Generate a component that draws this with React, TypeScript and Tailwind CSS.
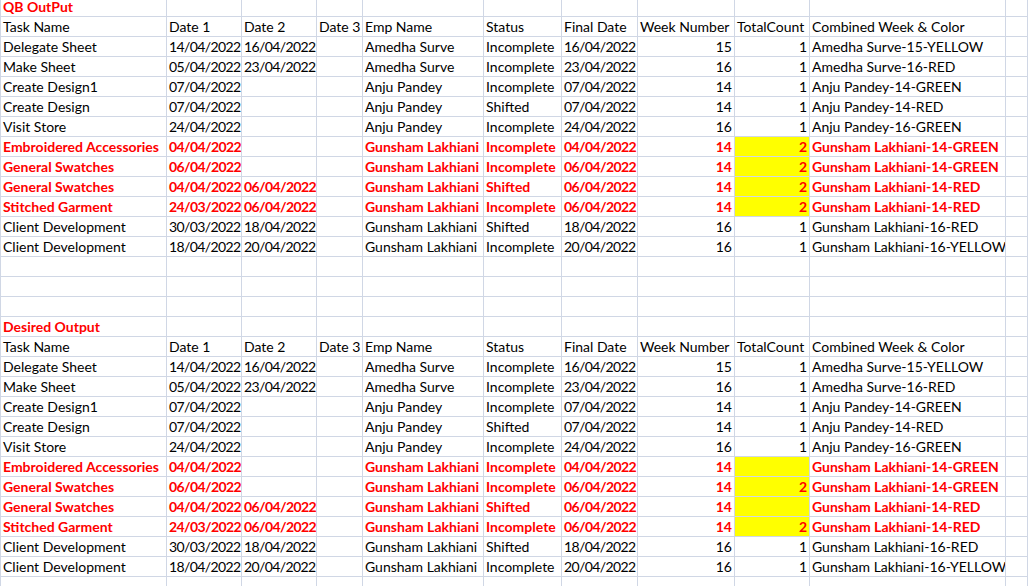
import React from "react";

type Row = {
  task: string;
  d1: string;
  d2: string;
  emp: string;
  status: string;
  final: string;
  week: number;
  total: string;
  combined: string;
  hot?: boolean;
};

const qbRows: Row[] = [
  { task: "Delegate Sheet", d1: "14/04/2022", d2: "16/04/2022", emp: "Amedha Surve", status: "Incomplete", final: "16/04/2022", week: 15, total: "1", combined: "Amedha Surve-15-YELLOW" },
  { task: "Make Sheet", d1: "05/04/2022", d2: "23/04/2022", emp: "Amedha Surve", status: "Incomplete", final: "23/04/2022", week: 16, total: "1", combined: "Amedha Surve-16-RED" },
  { task: "Create Design1", d1: "07/04/2022", d2: "", emp: "Anju Pandey", status: "Incomplete", final: "07/04/2022", week: 14, total: "1", combined: "Anju Pandey-14-GREEN" },
  { task: "Create Design", d1: "07/04/2022", d2: "", emp: "Anju Pandey", status: "Shifted", final: "07/04/2022", week: 14, total: "1", combined: "Anju Pandey-14-RED" },
  { task: "Visit Store", d1: "24/04/2022", d2: "", emp: "Anju Pandey", status: "Incomplete", final: "24/04/2022", week: 16, total: "1", combined: "Anju Pandey-16-GREEN" },
  { task: "Embroidered Accessories", d1: "04/04/2022", d2: "", emp: "Gunsham Lakhiani", status: "Incomplete", final: "04/04/2022", week: 14, total: "2", combined: "Gunsham Lakhiani-14-GREEN", hot: true },
  { task: "General Swatches", d1: "06/04/2022", d2: "", emp: "Gunsham Lakhiani", status: "Incomplete", final: "06/04/2022", week: 14, total: "2", combined: "Gunsham Lakhiani-14-GREEN", hot: true },
  { task: "General Swatches", d1: "04/04/2022", d2: "06/04/2022", emp: "Gunsham Lakhiani", status: "Shifted", final: "06/04/2022", week: 14, total: "2", combined: "Gunsham Lakhiani-14-RED", hot: true },
  { task: "Stitched Garment", d1: "24/03/2022", d2: "06/04/2022", emp: "Gunsham Lakhiani", status: "Incomplete", final: "06/04/2022", week: 14, total: "2", combined: "Gunsham Lakhiani-14-RED", hot: true },
  { task: "Client Development", d1: "30/03/2022", d2: "18/04/2022", emp: "Gunsham Lakhiani", status: "Shifted", final: "18/04/2022", week: 16, total: "1", combined: "Gunsham Lakhiani-16-RED" },
  { task: "Client Development", d1: "18/04/2022", d2: "20/04/2022", emp: "Gunsham Lakhiani", status: "Incomplete", final: "20/04/2022", week: 16, total: "1", combined: "Gunsham Lakhiani-16-YELLOW" },
];

// desired output only shows the count once per group
const desiredRows: Row[] = qbRows.map((r, i) =>
  r.hot && (i === 5 || i === 7) ? { ...r, total: "" } : r
);

const cols = "grid grid-cols-[166px_75px_75px_46px_121px_78px_76px_97px_75px_196px_1fr]";
const cell = "h-5 border-r border-b border-[#d0d7e5] px-[2px] leading-[20px] whitespace-nowrap overflow-hidden";

function Cell({ children, right, yellow, num }: { children?: React.ReactNode; right?: boolean; yellow?: boolean; num?: boolean }) {
  return (
    <div className={`${cell} ${right ? "text-right" : ""} ${yellow ? "bg-[#ffff00]" : ""} ${num ? "tracking-[-0.6px]" : ""}`}>
      {children}
    </div>
  );
}

function EmptyRow() {
  return (
    <div className={cols}>
      {Array.from({ length: 11 }).map((_, i) => (
        <Cell key={i} />
      ))}
    </div>
  );
}

function TitleRow({ title }: { title: string }) {
  return (
    <div className={cols}>
      <Cell>
        <span className="font-bold text-[#ff0000]">{title}</span>
      </Cell>
      {Array.from({ length: 10 }).map((_, i) => (
        <Cell key={i} />
      ))}
    </div>
  );
}

function HeaderRow() {
  const heads = ["Task Name", "Date 1", "Date 2", "Date 3", "Emp Name", "Status", "Final Date", "Week Number", "TotalCount", "Combined Week & Color", ""];
  return (
    <div className={cols}>
      {heads.map((h, i) => (
        <Cell key={i}>{h}</Cell>
      ))}
    </div>
  );
}

function DataRow({ row }: { row: Row }) {
  return (
    <div className={`${cols} ${row.hot ? "font-bold text-[#ff0000]" : ""}`}>
      <Cell>{row.task}</Cell>
      <Cell right num>{row.d1}</Cell>
      <Cell right num>{row.d2}</Cell>
      <Cell />
      <Cell>{row.emp}</Cell>
      <Cell>{row.status}</Cell>
      <Cell right num>{row.final}</Cell>
      <Cell right>{row.week}</Cell>
      <Cell right yellow={row.hot}>{row.total}</Cell>
      <Cell>{row.combined}</Cell>
      <Cell />
    </div>
  );
}

export default function App() {
  return (
    <div className="h-[586px] w-[1028px] overflow-hidden bg-white text-[14px] text-black" style={{ fontFamily: "Lato, 'Open Sans', sans-serif" }}>
      <div className="-mt-[3px] border-l border-[#d0d7e5]">
        <TitleRow title="QB OutPut" />
        <HeaderRow />
        {qbRows.map((r, i) => (
          <DataRow key={i} row={r} />
        ))}
        <EmptyRow />
        <EmptyRow />
        <EmptyRow />
        <TitleRow title="Desired Output" />
        <HeaderRow />
        {desiredRows.map((r, i) => (
          <DataRow key={i} row={r} />
        ))}
        <EmptyRow />
      </div>
    </div>
  );
}
